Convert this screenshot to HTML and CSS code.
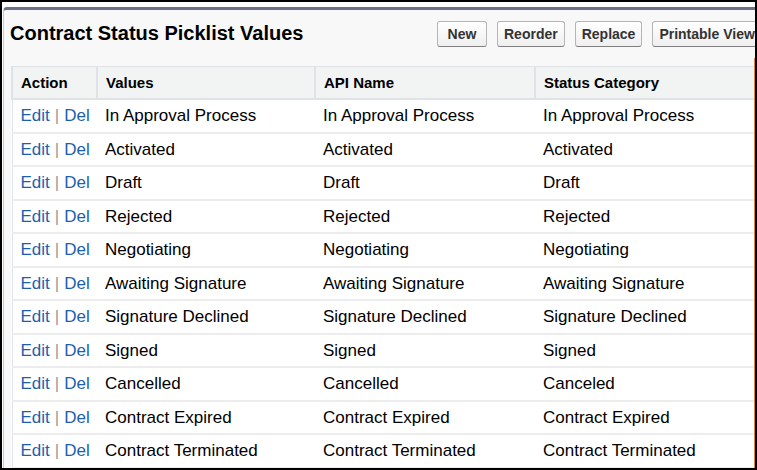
FILE: index.html
```html
<!DOCTYPE html>
<html lang="en">
<head>
  <meta charset="UTF-8">
  <title>Contract Status Picklist Values</title>
  <link rel="stylesheet" href="styles.css">
</head>
<body>
  <div class="frame">
    <div class="block">
      <div class="block-header">
        <h2 class="title">Contract Status Picklist Values</h2>
        <div class="buttons">
          <button class="btn btn-new">New</button>
          <button class="btn">Reorder</button>
          <button class="btn">Replace</button>
          <button class="btn">Printable View</button>
        </div>
      </div>

      <table class="list">
        <thead>
          <tr>
            <th class="col-action">Action</th>
            <th class="col-value">Values</th>
            <th class="col-api">API Name</th>
            <th class="col-status">Status Category</th>
          </tr>
        </thead>
        <tbody id="rows"></tbody>
      </table>
    </div>
  </div>

  <script>
    const values = [
      ['In Approval Process', 'In Approval Process', 'In Approval Process'],
      ['Activated', 'Activated', 'Activated'],
      ['Draft', 'Draft', 'Draft'],
      ['Rejected', 'Rejected', 'Rejected'],
      ['Negotiating', 'Negotiating', 'Negotiating'],
      ['Awaiting Signature', 'Awaiting Signature', 'Awaiting Signature'],
      ['Signature Declined', 'Signature Declined', 'Signature Declined'],
      ['Signed', 'Signed', 'Signed'],
      ['Cancelled', 'Cancelled', 'Canceled'],
      ['Contract Expired', 'Contract Expired', 'Contract Expired'],
      ['Contract Terminated', 'Contract Terminated', 'Contract Terminated']
    ];

    const tbody = document.getElementById('rows');
    values.forEach(row => {
      const tr = document.createElement('tr');
      tr.innerHTML =
        '<td class="actions"><a href="#">Edit</a><span class="sep">|</span><a href="#">Del</a></td>' +
        row.map(v => `<td>${v}</td>`).join('');
      tbody.appendChild(tr);
    });
  </script>
</body>
</html>
```

FILE: styles.css
```css
body {
  margin: 0;
  font-family: "Liberation Sans", Arial, sans-serif;
  color: #000;
  background-color: #fff;
}
.frame {
  width: 757px;
  height: 470px;
  box-sizing: border-box;
  border: 2px solid #000;
  padding: 5px 0 0 1px;
  overflow: hidden;
  background-color: #fff;
}
.block {
  position: relative;
  height: 100%;
  border-top: 3px solid #6c7184;
  border-left: 1px solid #c9c9c9;
  border-top-left-radius: 4px;
  background-color: #f8f8f8;
  overflow: hidden;
}
/* thin orange edge on the right side */
.block::after {
  content: "";
  position: absolute;
  top: 48px;
  right: 0;
  bottom: 0;
  width: 1px;
  background-color: #d8892c;
}
.block-header {
  display: flex;
  align-items: center;
  height: 47px;
  padding-left: 6px;
  white-space: nowrap;
}
.title {
  width: 427px;
  flex-shrink: 0;
  margin: 0;
  font-size: 20px;
  font-weight: bold;
  color: #000;
}
.buttons {
  display: flex;
  gap: 10px;
  margin-top: 1px;
}
.btn {
  height: 26px;
  padding: 0 6px;
  font-family: "Liberation Sans", Arial, sans-serif;
  font-size: 14px;
  font-weight: bold;
  color: #333;
  border: 1px solid #b5b5b5;
  border-bottom-color: #7f7f7f;
  border-radius: 3px;
  background: linear-gradient(#ffffff, #efefef);
  flex-shrink: 0;
}
.btn-new {
  min-width: 50px;
}
.list {
  margin: 9px 0 0 7px;
  width: 900px;
  border-collapse: collapse;
  background-color: #fff;
  border: 1px solid #e0e3e5;
  font-size: 17px;
  table-layout: fixed;
}
.list th {
  height: 31px;
  padding: 0 8px;
  font-size: 15px;
  font-weight: bold;
  text-align: left;
  background-color: #f2f3f3;
  border: 2px solid #e0e3e5;
  border-top-width: 1px;
}
.list td {
  height: 30.5px;
  padding: 1px 8px 0;
  white-space: nowrap;
  border-bottom: 2px solid #ececec;
}
.col-action { width: 67px; }
.col-value { width: 200px; }
.col-api { width: 202px; }
.list td.actions {
  color: #999;
}
.list a {
  color: #1d5faf;
  text-decoration: none;
}
.sep {
  margin: 0 5px;
}
```
